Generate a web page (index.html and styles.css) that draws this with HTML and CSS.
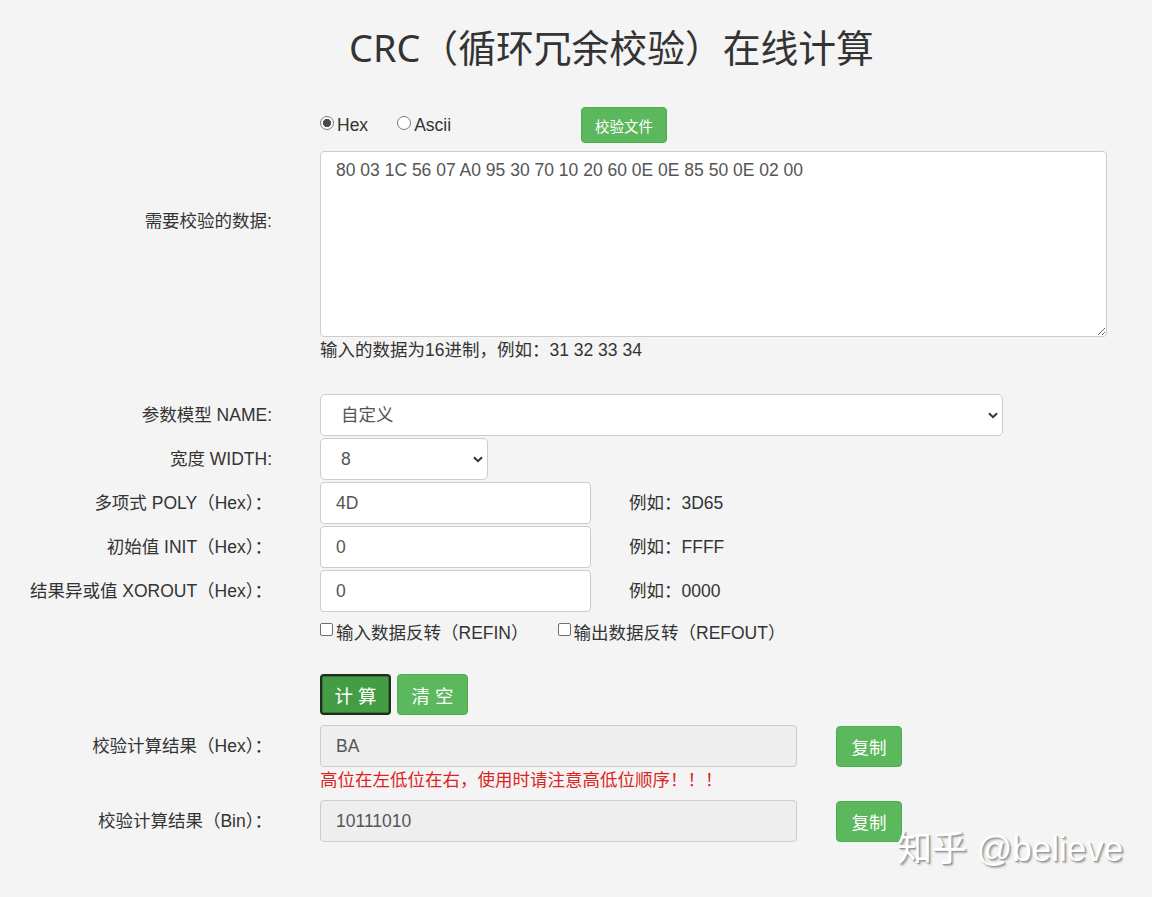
FILE: index.html
```html
<!DOCTYPE html>
<html lang="zh-CN">
<head>
<meta charset="utf-8">
<title>CRC（循环冗余校验）在线计算</title>
<link rel="stylesheet" href="styles.css">
</head>
<body>
<div class="page">
  <h1 class="title">CRC（循环冗余校验）在线计算</h1>
  <div class="form">
    <div class="row row-data">
      <label class="lbl lbl-data">需要校验的数据:</label>
      <div class="ctl">
        <div class="mode">
          <label class="radio"><input type="radio" name="mode" checked>Hex</label>
          <label class="radio radio-ascii"><input type="radio" name="mode">Ascii</label>
          <button class="btn btn-file">校验文件</button>
        </div>
        <textarea class="data">80 03 1C 56 07 A0 95 30 70 10 20 60 0E 0E 85 50 0E 02 00</textarea>
        <div class="hint">输入的数据为16进制，例如：31 32 33 34</div>
      </div>
    </div>

    <div class="row row-name">
      <label class="lbl">参数模型 NAME:</label>
      <div class="ctl">
        <span class="sel sel-name">
          <select><option>自定义</option></select>
          <svg class="chev" viewBox="0 0 10 7" width="10" height="7"><path d="M1 1.2 L5 5.2 L9 1.2" fill="none" stroke="#333" stroke-width="2"/></svg>
        </span>
      </div>
    </div>

    <div class="row row-field">
      <label class="lbl">宽度 WIDTH:</label>
      <div class="ctl">
        <span class="sel sel-width">
          <select><option>8</option></select>
          <svg class="chev" viewBox="0 0 10 7" width="10" height="7"><path d="M1 1.2 L5 5.2 L9 1.2" fill="none" stroke="#333" stroke-width="2"/></svg>
        </span>
      </div>
    </div>

    <div class="row row-field">
      <label class="lbl">多项式 POLY（Hex）：</label>
      <div class="ctl ctl-inline">
        <input class="inp inp-param" type="text" value="4D">
        <span class="example">例如：3D65</span>
      </div>
    </div>

    <div class="row row-field">
      <label class="lbl">初始值 INIT（Hex）：</label>
      <div class="ctl ctl-inline">
        <input class="inp inp-param" type="text" value="0">
        <span class="example">例如：FFFF</span>
      </div>
    </div>

    <div class="row row-field">
      <label class="lbl">结果异或值 XOROUT（Hex）：</label>
      <div class="ctl ctl-inline">
        <input class="inp inp-param" type="text" value="0">
        <span class="example">例如：0000</span>
      </div>
    </div>

    <div class="row row-checks">
      <span class="lbl"></span>
      <div class="ctl ctl-inline">
        <label class="check"><input type="checkbox">输入数据反转（REFIN）</label>
        <label class="check check-out"><input type="checkbox">输出数据反转（REFOUT）</label>
      </div>
    </div>

    <div class="row row-actions">
      <span class="lbl"></span>
      <div class="ctl ctl-inline">
        <button class="btn btn-big btn-active">计 算</button>
        <button class="btn btn-big btn-clear">清 空</button>
      </div>
    </div>

    <div class="row row-result">
      <label class="lbl">校验计算结果（Hex）：</label>
      <div class="ctl ctl-inline">
        <input class="inp inp-result" type="text" value="BA" readonly>
        <button class="btn btn-copy">复制</button>
      </div>
    </div>

    <div class="row row-warn">
      <span class="lbl"></span>
      <div class="ctl warn">高位在左低位在右，使用时请注意高低位顺序！！！</div>
    </div>

    <div class="row row-result row-bin">
      <label class="lbl">校验计算结果（Bin）：</label>
      <div class="ctl ctl-inline">
        <input class="inp inp-result" type="text" value="10111010" readonly>
        <button class="btn btn-copy">复制</button>
      </div>
    </div>
  </div>
  <div class="watermark">知乎 @believe</div>
</div>
</body>
</html>
```

FILE: styles.css
```css
html, body {
  margin: 0;
  padding: 0;
  background: #f4f4f4;
}

body {
  font-family: "Liberation Sans", "Noto Sans CJK SC", sans-serif;
  font-size: 17.5px;
  color: #333;
}

.page {
  position: relative;
  width: 1152px;
  height: 897px;
  overflow: hidden;
}

.title {
  margin: 0;
  padding: 20px 0 0 71px;
  font-family: "Noto Sans", "Noto Sans CJK SC", sans-serif;
  font-size: 37.8px;
  font-weight: 400;
  line-height: 56px;
  text-align: center;
  color: #333;
}

.form {
  margin-top: 31px;
}

.row {
  display: grid;
  grid-template-columns: 272px 1fr;
  column-gap: 48px;
  align-items: center;
}

.lbl {
  text-align: right;
  line-height: 25px;
  white-space: nowrap;
}

.lbl-data {
  align-self: start;
  margin-top: 102px;
}

.ctl {
  min-width: 0;
}

.ctl-inline {
  display: flex;
  align-items: center;
}

/* data block */
.mode {
  display: flex;
  align-items: center;
  height: 36px;
}

.radio {
  display: flex;
  align-items: center;
  line-height: 22px;
}

.radio input {
  appearance: none;
  -webkit-appearance: none;
  box-sizing: border-box;
  margin: -4px 3px 0 0;
  width: 14px;
  height: 14px;
  border: 1px solid #7a7a7a;
  border-radius: 50%;
  background: #fff;
}

.radio input:checked {
  background: radial-gradient(circle, #4a4a4a 0 3.8px, #fff 4.4px);
}

.radio-ascii {
  margin-left: 29px;
}

.btn {
  font-family: "Liberation Sans", "Noto Sans CJK SC", sans-serif;
  border: 1px solid #4cae4c;
  background: #5cb85c;
  color: #fff;
  border-radius: 4px;
  padding: 0;
  cursor: pointer;
}

.btn-file {
  margin-left: 130px;
  width: 86px;
  height: 36px;
  font-size: 14.5px;
}

.data {
  display: block;
  box-sizing: border-box;
  width: 787px;
  height: 186px;
  margin: 8px 0 0;
  padding: 6px 15px;
  border: 1px solid #ccc;
  border-radius: 4px;
  background: #fff;
  font-family: "Liberation Sans", "Noto Sans CJK SC", sans-serif;
  font-size: 17.5px;
  line-height: 25px;
  color: #555;
  resize: both;
}

.hint {
  line-height: 26px;
  color: #333;
}

/* selects */
.row-name {
  margin-top: 31px;
}

.row-field {
  margin-top: 2px;
}

.sel {
  position: relative;
  display: block;
}

.sel select {
  display: block;
  box-sizing: border-box;
  height: 42px;
  padding: 0 30px 0 20px;
  border: 1px solid #ccc;
  border-radius: 5px;
  background: #fff;
  font-family: "Liberation Sans", "Noto Sans CJK SC", sans-serif;
  font-size: 17.5px;
  color: #555;
  appearance: none;
  -webkit-appearance: none;
}

.sel-name select {
  width: 683px;
}

.sel-width select {
  width: 168px;
}

.chev {
  position: absolute;
  top: 18px;
  pointer-events: none;
}

.sel-name .chev {
  left: 668px;
}

.sel-width .chev {
  left: 153px;
}

/* inputs */
.inp {
  display: block;
  box-sizing: border-box;
  height: 42px;
  padding: 0 15px;
  border: 1px solid #ccc;
  border-radius: 4px;
  background: #fff;
  font-family: "Liberation Sans", "Noto Sans CJK SC", sans-serif;
  font-size: 17.5px;
  color: #555;
}

.inp-param {
  width: 271px;
}

.example {
  margin-left: 38px;
  margin-top: -3px;
  color: #333;
}

/* checkboxes */
.row-checks {
  margin-top: 10px;
}

.check {
  display: flex;
  align-items: center;
  line-height: 22px;
}

.check input {
  appearance: none;
  -webkit-appearance: none;
  box-sizing: border-box;
  margin: -7px 3px 0 0;
  width: 13px;
  height: 13px;
  border: 1px solid #6e6e6e;
  border-radius: 2px;
  background: #fff;
}

.check-out {
  margin-left: 29px;
}

/* action buttons */
.row-actions {
  margin-top: 30px;
}

.btn-big {
  width: 71px;
  height: 41px;
  font-size: 18.5px;
  margin-right: 6px;
}

.btn-active {
  background: #449d44;
  border: 2px solid #1c2f1c;
  box-shadow: inset 0 0 0 1px #3a733a;
}

/* results */
.row-result {
  margin-top: 10px;
}

.inp-result {
  width: 477px;
  background: #eee;
}

.btn-copy {
  margin-left: 39px;
  width: 66px;
  height: 41px;
  font-size: 17.5px;
}

.row-warn {
  margin-top: 0;
}

.warn {
  line-height: 26px;
  color: #dc2424;
}

.row-bin {
  margin-top: 7px;
}

/* watermark */
.watermark {
  position: absolute;
  left: 897px;
  top: 828px;
  font-family: "Liberation Sans", "Noto Sans CJK SC", sans-serif;
  font-size: 35px;
  line-height: 42px;
  color: #fff;
  text-shadow: 1px 1px 0 #999, 2px 2px 2px #aaa;
  white-space: nowrap;
}
```
